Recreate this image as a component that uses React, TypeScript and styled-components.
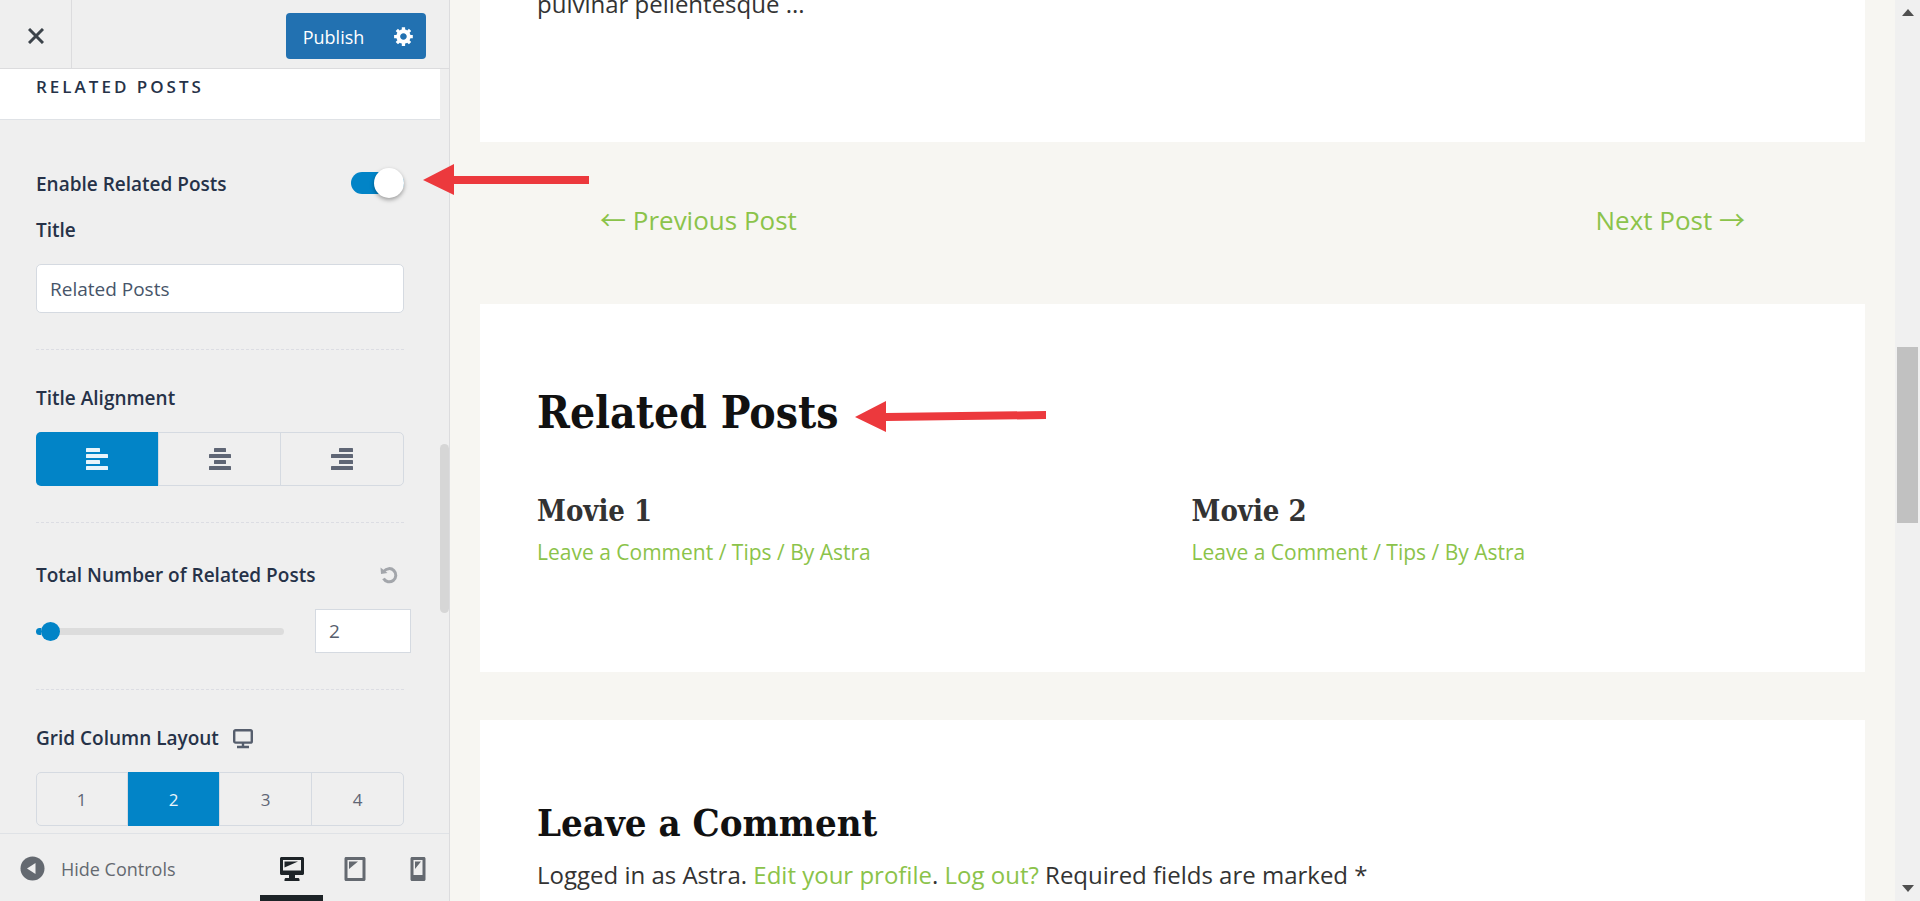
import React, { useState } from "react";
import styled, { createGlobalStyle } from "styled-components";

const ui = `"Open Sans", "Noto Sans", sans-serif`;
const serif = `"DejaVu Serif Condensed", "DejaVu Serif", serif`;
const blue = "#0284c7";
const green = "#8bc34a";

const GlobalStyle = createGlobalStyle`
  *, *::before, *::after { box-sizing: border-box; }
  body { margin: 0; font-family: ${ui}; background: #f7f6f2; }
  h1, h2, h3, p { margin: 0; }
  button { font: inherit; color: inherit; border: 0; padding: 0; background: none; cursor: pointer; }
  a { color: ${green}; text-decoration: none; }
`;

const Shell = styled.div`
  position: relative;
  display: flex;
  height: 100vh;
  overflow: hidden;
`;

const Sidebar = styled.aside`
  flex: 0 0 450px;
  display: flex;
  flex-direction: column;
  background: #efefef;
  border-right: 1px solid #dcdcde;
  color: #263248;
`;

const SidebarHeader = styled.header`
  display: flex;
  align-items: center;
  justify-content: space-between;
  height: 69px;
  padding-right: 23px;
  border-bottom: 1px solid #dcdcde;
`;

const CloseButton = styled.button`
  display: flex;
  align-items: center;
  justify-content: center;
  width: 72px;
  height: 100%;
  padding-top: 3px;
  border-right: 1px solid #dcdcde;
  color: #3c434a;
`;

const PublishGroup = styled.div`
  display: flex;
  height: 46px;
  margin-top: 4px;
  border-radius: 4px;
  overflow: hidden;
  background: #2271b1;
  color: #fff;
`;

const PublishButton = styled.button`
  width: 95px;
  padding-top: 1px;
  font-size: 18px;
  font-weight: 500;
`;

const PublishSettings = styled.button`
  display: flex;
  align-items: center;
  justify-content: center;
  width: 45px;
`;

const ScrollRow = styled.div`
  flex: 1;
  display: flex;
  min-height: 0;
`;

const Panel = styled.div`
  flex: 1;
  overflow: hidden;
`;

const PanelTrack = styled.div`
  flex: 0 0 9px;
  padding-top: 375px;
`;

const PanelThumb = styled.div`
  height: 169px;
  border-radius: 5px;
  background: #d6d6d6;
`;

const SectionTitle = styled.h2`
  height: 51px;
  padding: 6px 36px 0;
  background: #fff;
  border-bottom: 1px solid #dfe2e6;
  font-size: 17px;
  font-weight: 600;
  line-height: 24px;
  letter-spacing: 3px;
`;

const Controls = styled.div`
  padding: 12px 36px 0;
`;

const Control = styled.section`
  padding: 36px 0;
  & + & { border-top: 1px dashed #dcdde3; }
`;

const LabelRow = styled.div<{ $tall?: boolean }>`
  display: flex;
  align-items: center;
  justify-content: space-between;
  min-height: ${(p) => (p.$tall ? 32 : 24)}px;
  margin-bottom: ${(p) => (p.$tall ? 18 : 21)}px;
`;

const Label = styled.label`
  display: flex;
  align-items: center;
  gap: 14px;
  font-size: 19px;
  font-weight: 600;
  line-height: 25px;
`;

const Switch = styled.input`
  appearance: none;
  position: relative;
  width: 53px;
  height: 22px;
  margin: 0 0 2px;
  border-radius: 11px;
  background: #c3c7cc;
  cursor: pointer;

  &::after {
    content: "";
    position: absolute;
    top: -4px;
    left: 0;
    width: 30px;
    height: 30px;
    border-radius: 50%;
    background: #fff;
    box-shadow: 0 2px 4px rgba(0, 0, 0, 0.35);
  }
  &:checked { background: ${blue}; }
  &:checked::after { left: 23px; }
`;

const TextInput = styled.input`
  display: block;
  width: 100%;
  height: 49px;
  padding: 0 13px;
  border: 1px solid #d5dae1;
  border-radius: 5px;
  background: #fff;
  color: #475569;
  font-family: ${ui};
  font-size: 19px;
`;

const Segments = styled.div`
  display: flex;
  height: 54px;
  border: 1px solid #d5dae1;
  border-radius: 5px;
`;

const Segment = styled.button<{ $active: boolean }>`
  flex: 1;
  display: flex;
  align-items: center;
  justify-content: center;
  margin: -1px 0;
  background: ${(p) => (p.$active ? blue : "transparent")};
  color: ${(p) => (p.$active ? "#eaf5fb" : "#5f6675")};
  font-size: 17px;

  & + & { border-left: 1px solid ${(p) => (p.$active ? blue : "#d5dae1")}; }
  &:first-child { margin-left: -1px; border-radius: 5px 0 0 5px; }
`;

const ResetButton = styled.button`
  display: flex;
  margin-right: 6px;
  color: #a3a6ab;
`;

const SliderRow = styled.div`
  display: flex;
  align-items: center;
  gap: 31px;
  margin-right: -7px;
`;

const Slider = styled.input<{ $percent: number }>`
  appearance: none;
  flex: 1;
  min-width: 0;
  height: 7px;
  margin: 0;
  border-radius: 4px;
  background: linear-gradient(to right, ${blue} ${(p) => p.$percent}%, #dcdcdc ${(p) => p.$percent}%);

  &::-webkit-slider-thumb {
    appearance: none;
    width: 19px;
    height: 19px;
    border-radius: 50%;
    background: ${blue};
  }
`;

const NumberInput = styled.input`
  width: 96px;
  height: 44px;
  padding: 0 13px;
  border: 1px solid #d5dae1;
  background: #fff;
  color: #565e6d;
  font-family: ${ui};
  font-size: 19px;
`;

const SidebarFooter = styled.footer`
  display: flex;
  justify-content: space-between;
  height: 68px;
  border-top: 1px solid #dfe2e6;
  color: #646970;
`;

const HideButton = styled.button`
  display: flex;
  align-items: center;
  gap: 16px;
  padding: 2px 0 0 20px;
  font-size: 18px;
`;

const Devices = styled.div`
  display: flex;
`;

const DeviceButton = styled.button<{ $active: boolean }>`
  display: flex;
  align-items: center;
  justify-content: center;
  width: 63px;
  padding-top: 8px;
  border-bottom: 6px solid ${(p) => (p.$active ? "#1d2327" : "transparent")};
  color: ${(p) => (p.$active ? "#1d2327" : "#646970")};
`;

const Preview = styled.main`
  flex: 1;
  min-width: 0;
  padding: 0 30px;
  overflow: hidden;
  color: #333;
`;

const Card = styled.section`
  padding: 79px 57px 99px;
  background: #fff;
  & + & { margin-top: 48px; }
`;

const Article = styled.article`
  display: flow-root;
  padding: 0 57px 118px;
  background: #fff;
`;

const Body = styled.p`
  font-size: 24px;
  line-height: 40px;
`;

const Excerpt = styled(Body)`
  margin-top: -16px;
`;

const CommentNote = styled(Body)`
  margin-top: 8px;
`;

const PostNav = styled.nav`
  display: flex;
  align-items: center;
  justify-content: space-between;
  height: 162px;
  padding: 0 120px 6px;
  font-size: 26px;
  line-height: 40px;
`;

const NavArrow = styled.span`
  font-family: "Noto Sans CJK SC", sans-serif;
  font-size: 26px;
  line-height: 1;
`;

const Heading = styled.h2<{ $size: number }>`
  color: #111;
  font-family: ${serif};
  font-size: ${(p) => p.$size}px;
  font-weight: 700;
  line-height: ${(p) => (p.$size > 40 ? 60 : 48)}px;
`;

const PostGrid = styled.div`
  display: grid;
  grid-template-columns: 1fr 1fr;
  gap: 38px;
  margin-top: 48px;
`;

const PostTitle = styled.h3`
  font-family: ${serif};
  font-size: 29px;
  font-weight: 700;
  line-height: 41px;
`;

const Meta = styled.p`
  color: ${green};
  font-size: 21px;
  line-height: 41px;
`;

const PageTrack = styled.div`
  flex: 0 0 25px;
  display: flex;
  flex-direction: column;
  align-items: center;
  justify-content: space-between;
  padding: 9px 0;
  background: #f0f0f0;
  color: #505050;
`;

const PageThumb = styled.div`
  position: absolute;
  top: 347px;
  width: 21px;
  height: 176px;
  background: #c1c1c1;
`;

const Pointer = styled.svg<{ $left: number; $top: number }>`
  position: absolute;
  left: ${(p) => p.$left}px;
  top: ${(p) => p.$top}px;
  fill: #ec393d;
  pointer-events: none;
`;

const devicePaths = {
  Desktop:
    "M3 2h14c.55 0 1 .45 1 1v10c0 .55-.45 1-1 1h-5v2h2c.55 0 1 .45 1 1v1H5v-1c0-.55.45-1 1-1h2v-2H3c-.55 0-1-.45-1-1V3c0-.55.45-1 1-1zm13 9V4H4v7h12zM5 5h9L5 9V5z",
  Tablet:
    "M4 2h12c.55 0 1 .45 1 1v14c0 .55-.45 1-1 1H4c-.55 0-1-.45-1-1V3c0-.55.45-1 1-1zm11 14V4H5v12h10zM6 5h6l-6 5V5z",
  Mobile:
    "M6 2h8c.55 0 1 .45 1 1v14c0 .55-.45 1-1 1H6c-.55 0-1-.45-1-1V3c0-.55.45-1 1-1zm7 12V4H7v10h6zM8 5h4l-4 5V5z",
};

const alignLines = {
  Left: [[0, 14], [0, 22], [0, 14], [0, 22]],
  Center: [[5, 12], [0, 22], [5, 12], [0, 22]],
  Right: [[8, 14], [0, 22], [8, 14], [0, 22]],
};

type Align = keyof typeof alignLines;
type Device = keyof typeof devicePaths;

const AlignIcon = ({ align }: { align: Align }) => (
  <svg width="22" height="22" viewBox="0 0 22 22" fill="currentColor" aria-hidden="true">
    {alignLines[align].map(([x, w], i) => (
      <rect key={i} x={x} y={i * 6} width={w} height="4" rx="0.6" />
    ))}
  </svg>
);

const CloseIcon = () => (
  <svg width="16" height="16" viewBox="0 0 16 16" stroke="currentColor" strokeWidth="3" aria-hidden="true">
    <path d="M1 1l14 14M15 1L1 15" />
  </svg>
);

const GearIcon = () => (
  <svg width="22" height="22" viewBox="0 0 20 20" fill="currentColor" aria-hidden="true">
    <path d="M18 12h-2.18c-.17.7-.44 1.35-.81 1.93l1.54 1.54-2.1 2.1-1.54-1.54c-.58.36-1.23.63-1.91.79V19H8v-2.18c-.68-.16-1.33-.43-1.91-.79l-1.54 1.54-2.12-2.12 1.54-1.54c-.36-.58-.63-1.23-.79-1.91H1V9.03h2.17c.16-.7.44-1.35.8-1.94L2.43 5.55l2.1-2.1 1.54 1.54c.58-.37 1.24-.64 1.93-.81V2h3v2.18c.68.16 1.33.43 1.91.79l1.54-1.54 2.12 2.12-1.54 1.54c.36.59.64 1.24.8 1.94H18V12zm-8.5 1.5c1.66 0 3-1.34 3-3s-1.34-3-3-3-3 1.34-3 3 1.34 3 3 3z" />
  </svg>
);

const ResetIcon = () => (
  <svg width="18" height="18" viewBox="0 0 18 18" fill="none" stroke="currentColor" strokeWidth="3" aria-hidden="true">
    <path d="M4 5.2A6.6 6.6 0 1 1 3.5 12.5" />
    <path d="M0.5 1.5l.5 6.5 6.5-1z" fill="currentColor" stroke="none" />
  </svg>
);

const ScreenIcon = () => (
  <svg width="20" height="20" viewBox="0 0 20 20" fill="none" stroke="#565e6d" strokeWidth="2.4" aria-hidden="true">
    <rect x="1.2" y="1.2" width="17.6" height="12.4" rx="1.4" />
    <path d="M10 14v4M4 18h12" />
  </svg>
);

const CollapseIcon = () => (
  <svg width="25" height="25" viewBox="0 0 25 25" aria-hidden="true">
    <circle cx="12.5" cy="12.5" r="12" fill="#646970" />
    <path d="M7 12.5L15.5 7v11z" fill="#efefef" />
  </svg>
);

export default function App() {
  const [enabled, setEnabled] = useState(true);
  const [title, setTitle] = useState("Related Posts");
  const [align, setAlign] = useState<Align>("Left");
  const [count, setCount] = useState(2);
  const [columns, setColumns] = useState(2);
  const [device, setDevice] = useState<Device>("Desktop");

  return (
    <>
      <GlobalStyle />
      <Shell>
        <Sidebar>
          <SidebarHeader>
            <CloseButton aria-label="Close"><CloseIcon /></CloseButton>
            <PublishGroup>
              <PublishButton>Publish</PublishButton>
              <PublishSettings aria-label="Publish settings"><GearIcon /></PublishSettings>
            </PublishGroup>
          </SidebarHeader>

          <ScrollRow>
            <Panel>
              <SectionTitle>RELATED POSTS</SectionTitle>
              <Controls>
                <Control>
                  <LabelRow $tall>
                    <Label htmlFor="enable">Enable Related Posts</Label>
                    <Switch id="enable" type="checkbox" checked={enabled} onChange={(e) => setEnabled(e.target.checked)} />
                  </LabelRow>
                  <LabelRow>
                    <Label htmlFor="title">Title</Label>
                  </LabelRow>
                  <TextInput id="title" type="text" value={title} onChange={(e) => setTitle(e.target.value)} />
                </Control>

                <Control>
                  <LabelRow><Label as="span">Title Alignment</Label></LabelRow>
                  <Segments role="group" aria-label="Title Alignment">
                    {(Object.keys(alignLines) as Align[]).map((a) => (
                      <Segment key={a} $active={a === align} aria-label={a} onClick={() => setAlign(a)}>
                        <AlignIcon align={a} />
                      </Segment>
                    ))}
                  </Segments>
                </Control>

                <Control>
                  <LabelRow $tall>
                    <Label htmlFor="count">Total Number of Related Posts</Label>
                    <ResetButton aria-label="Reset" onClick={() => setCount(2)}><ResetIcon /></ResetButton>
                  </LabelRow>
                  <SliderRow>
                    <Slider type="range" min={0} max={100} aria-label="Total Number of Related Posts"
                      value={count} $percent={count} onChange={(e) => setCount(Number(e.target.value))} />
                    <NumberInput id="count" type="text" inputMode="numeric" value={count}
                      onChange={(e) => setCount(Number(e.target.value) || 0)} />
                  </SliderRow>
                </Control>

                <Control>
                  <LabelRow><Label as="span">Grid Column Layout <ScreenIcon /></Label></LabelRow>
                  <Segments role="group" aria-label="Grid Column Layout">
                    {[1, 2, 3, 4].map((n) => (
                      <Segment key={n} $active={n === columns} onClick={() => setColumns(n)}>{n}</Segment>
                    ))}
                  </Segments>
                </Control>
              </Controls>
            </Panel>
            <PanelTrack><PanelThumb /></PanelTrack>
          </ScrollRow>

          <SidebarFooter>
            <HideButton><CollapseIcon />Hide Controls</HideButton>
            <Devices>
              {(Object.keys(devicePaths) as Device[]).map((d) => (
                <DeviceButton key={d} $active={d === device} aria-label={d} onClick={() => setDevice(d)}>
                  <svg width="30" height="30" viewBox="0 0 20 20" fill="currentColor" aria-hidden="true">
                    <path d={devicePaths[d]} />
                  </svg>
                </DeviceButton>
              ))}
            </Devices>
          </SidebarFooter>
        </Sidebar>

        <Preview>
          <Article>
            <Excerpt>pulvinar pellentesque ...</Excerpt>
          </Article>
          <PostNav aria-label="Posts">
            <a href="#previous"><NavArrow>←</NavArrow> Previous Post</a>
            <a href="#next">Next Post <NavArrow>→</NavArrow></a>
          </PostNav>
          <Card>
            <Heading $size={44}>Related Posts</Heading>
            <PostGrid>
              {["Movie 1", "Movie 2"].map((name) => (
                <article key={name}>
                  <PostTitle>{name}</PostTitle>
                  <Meta>
                    <a href="#comment">Leave a Comment</a> / <a href="#tips">Tips</a> / By <a href="#astra">Astra</a>
                  </Meta>
                </article>
              ))}
            </PostGrid>
          </Card>
          <Card>
            <Heading $size={38}>Leave a Comment</Heading>
            <CommentNote>
              Logged in as Astra. <a href="#profile">Edit your profile</a>. <a href="#logout">Log out?</a> Required fields are marked *
            </CommentNote>
          </Card>
        </Preview>

        <PageTrack aria-hidden="true">
          <svg width="12" height="7" viewBox="0 0 12 7" fill="currentColor"><path d="M6 0l6 7H0z" /></svg>
          <PageThumb />
          <svg width="12" height="7" viewBox="0 0 12 7" fill="currentColor"><path d="M0 0h12L6 7z" /></svg>
        </PageTrack>

        <Pointer $left={423} $top={164} width="166" height="32" viewBox="0 0 166 32" aria-hidden="true">
          <path d="M0 16L31 0v12h135v8H31v11z" />
        </Pointer>
        <Pointer $left={855} $top={401} width="191" height="32" viewBox="0 0 191 32" aria-hidden="true">
          <path d="M0 16L31 0v12L191 10v8L31 20v11z" />
        </Pointer>
      </Shell>
    </>
  );
}
